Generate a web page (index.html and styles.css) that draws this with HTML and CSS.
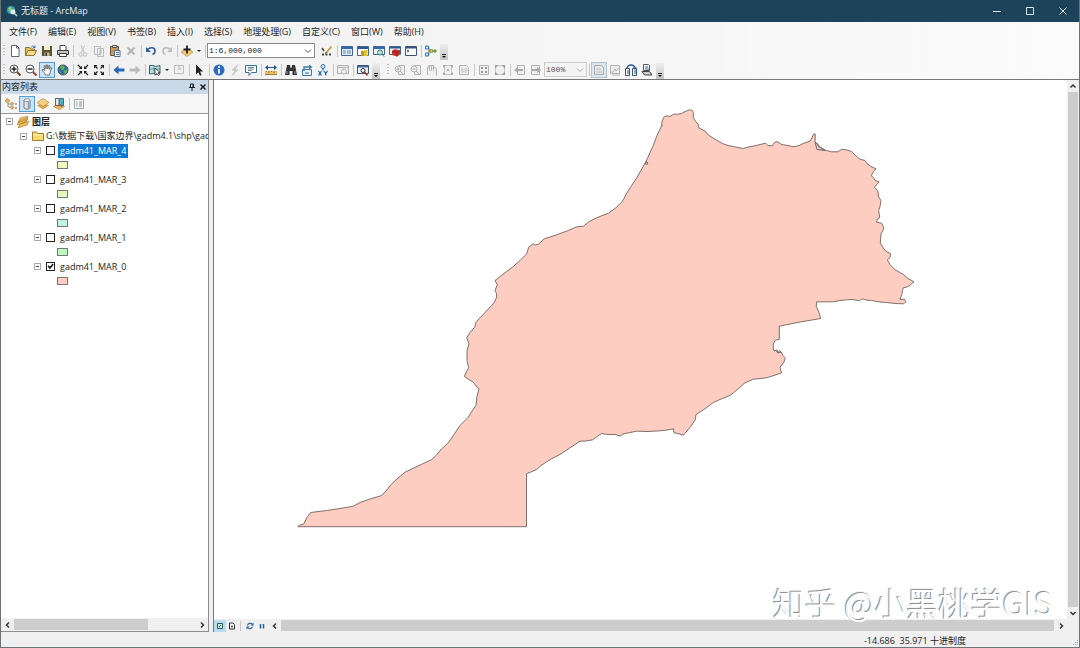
FILE: index.html
```html
<!DOCTYPE html>
<html lang="zh-CN">
<head>
    <meta charset="UTF-8">
    <meta name="viewport" content="width=device-width, initial-scale=1.0">
    <title>无标题 - ArcMap</title>
    <link rel="stylesheet" href="styles.css">
</head>
<body>
    <header class="titlebar">
        <svg class="icon" viewBox="0 0 12 12"><circle cx="5" cy="5" r="4" fill="#3aa0b8"/><path d="M2 3l3-1 1 3-2 2zM6 5l3-1v3l-2 1z" fill="#8ed07c"/><circle cx="7" cy="7" r="2" fill="#d8f0f6" stroke="#fff"/><path d="M8.500 8.500L11 11" stroke="#c8d4da" stroke-width="1.500"/></svg>
        <h1>无标题 - ArcMap</h1>
        <div class="winbtns">
            <button aria-label="最小化"><svg viewBox="0 0 10 10"><path d="M1 5.500h8"/></svg></button>
            <button aria-label="最大化"><svg viewBox="0 0 10 10"><path d="M1.500 1.500h7v7h-7z"/></svg></button>
            <button aria-label="关闭"><svg viewBox="0 0 10 10"><path d="M1.500 1.500l7 7M8.500 1.500l-7 7"/></svg></button>
        </div>
    </header>

    <div class="bars">
        <nav class="menu">
            <button>文件(F)</button>
            <button>编辑(E)</button>
            <button>视图(V)</button>
            <button>书签(B)</button>
            <button>插入(I)</button>
            <button>选择(S)</button>
            <button>地理处理(G)</button>
            <button>自定义(C)</button>
            <button>窗口(W)</button>
            <button>帮助(H)</button>
        </nav>

        <!-- standard toolbar -->
        <div class="toolbar">
            <span class="grip"></span>
            <button class="tool" aria-label="新建"><svg viewBox="0 0 12 12"><path d="M2.500.500h5l2.500 2.500v8.500h-7.500z" fill="#fff" stroke="#5c6773"/><path d="M7.500.500v2.500h2.500" fill="none" stroke="#5c6773"/></svg></button>
            <button class="tool" aria-label="打开"><svg viewBox="0 0 12 12"><path d="M.500 10.500v-8h4l1 1.500h4v2" fill="#e8c455" stroke="#8a7440"/><path d="M.500 10.500l2.500-5h8.500l-2.500 5z" fill="#f8dc7e" stroke="#8a7440"/><path d="M6 2.500c1.500-2 3-1.500 4 0m0-2v2h-2" fill="none" stroke="#3b6ea5"/></svg></button>
            <button class="tool" aria-label="保存"><svg viewBox="0 0 12 12"><path d="M1 1h10v10h-10z" fill="#5d5430"/><path d="M3 1h6v4h-6z" fill="#f2eed8"/><path d="M3.500 7.500h5v3.500h-5z" fill="#c9bf8a"/><path d="M4.500 8h1.500v3h-1.500z" fill="#333"/></svg></button>
            <button class="tool" aria-label="打印"><svg viewBox="0 0 12 12"><path d="M3 5v-4.500h5l1 1v3.500" fill="#fff" stroke="#444"/><path d="M.500 5.500h11v4h-11z" fill="#c4c4c4" stroke="#3c3c3c"/><path d="M2.500 8.500h7v3h-7z" fill="#fff" stroke="#3c3c3c"/></svg></button>
            <span class="sep"></span>
            <button class="tool off" aria-label="剪切"><svg viewBox="0 0 12 12"><path d="M4 .500l3 7M7.500.500l-3 7" fill="none" stroke="#999"/><circle cx="3.500" cy="9.500" r="1.700" fill="none" stroke="#999"/><circle cx="8" cy="9.500" r="1.700" fill="none" stroke="#999"/></svg></button>
            <button class="tool off" aria-label="复制"><svg viewBox="0 0 12 12"><path d="M1.500 1.500h6v8h-6zM4.500 3.500h6v8h-6z" fill="#eee" stroke="#999"/><path d="M6 6h3M6 8h3" stroke="#999"/></svg></button>
            <button class="tool" aria-label="粘贴"><svg viewBox="0 0 12 12"><path d="M1.500 1.500h8v9h-8z" fill="#c79a5b" stroke="#6b5333"/><path d="M3.500.500h4v2h-4z" fill="#ddd" stroke="#555"/><path d="M5.500 5.500h5.500v6h-5.500z" fill="#fff" stroke="#4b6a92"/><path d="M7 7.500h3M7 9.500h3" stroke="#4b6a92"/></svg></button>
            <button class="tool off" aria-label="删除"><svg viewBox="0 0 12 12"><path d="M2.500 2.500l7 7M9.500 2.500l-7 7" stroke="#888" stroke-width="1.800"/></svg></button>
            <span class="sep"></span>
            <button class="tool" aria-label="撤销"><svg viewBox="0 0 12 12"><path d="M2.500 4.500c3-3 7.500-2 7.500 1.500 0 2-1 3-2.500 3.500" fill="none" stroke="#2b5c9e" stroke-width="1.600"/><path d="M1 2v5h5z" fill="#2b5c9e"/></svg></button>
            <button class="tool off" aria-label="恢复"><svg viewBox="0 0 12 12"><path d="M9.500 4.500c-3-3-7.500-2-7.500 1.500 0 2 1 3 2.500 3.500" fill="none" stroke="#999" stroke-width="1.600"/><path d="M11 2v5h-5z" fill="#999"/></svg></button>
            <span class="sep"></span>
            <button class="tool" aria-label="添加数据"><svg viewBox="0 0 12 12"><path d="M6 3l6 4-6 4.500-6-4.500z" fill="#f1cc72" stroke="#a9832f" stroke-width=".6"/><path d="M6 .500v8M2.500 4.500h7" stroke="#222" stroke-width="1.800"/></svg></button>
            <button class="drop" aria-label="更多数据"></button>
            <span class="sep"></span>
            <div class="combo scale">
                <select aria-label="比例尺"><option>1:6,000,000</option></select>
                <svg viewBox="0 0 8 8"><path d="M1 2.500l3 3 3-3"/></svg>
            </div>
            <button class="tool" aria-label="编辑器"><svg viewBox="0 0 12 12"><path d="M1 9.500h10" stroke="#444" stroke-dasharray="2 1.500" stroke-width="2"/><path d="M1 3l2 3" stroke="#444" stroke-width="1.500"/><path d="M5 8l5.500-6.500" stroke="#c59a3c" stroke-width="1.800"/><path d="M4 9l.5-2 1.500 1z" fill="#333"/></svg></button>
            <span class="sep"></span>
            <button class="tool" aria-label="内容列表"><svg viewBox="0 0 12 12"><path d="M.500 1.500h11v9h-11z" fill="#e6eef8" stroke="#42648f"/><path d="M1 2h10v2h-10z" fill="#2f6ab3"/><path d="M2 6h3M6 6h4M2 8h3M6 8h4" stroke="#5587bf"/></svg></button>
            <button class="tool" aria-label="目录"><svg viewBox="0 0 12 12"><path d="M.500 1.500h11v9h-11z" fill="#fff" stroke="#42648f"/><path d="M1 2h10v2h-10z" fill="#2f5a93"/><path d="M4 6h3v5h-3z" fill="#b89a1e"/><path d="M7 5h3.500v6h-3.500z" fill="#e2c531"/></svg></button>
            <button class="tool" aria-label="搜索"><svg viewBox="0 0 12 12"><path d="M.500 1.500h11v8h-11z" fill="#eef4f8" stroke="#42648f"/><path d="M1 2h10v2h-10z" fill="#2f6ab3"/><circle cx="7" cy="7.500" r="2.500" fill="#bfe0d2" stroke="#338577"/><path d="M9 9.500l2 2" stroke="#338577"/></svg></button>
            <button class="tool" aria-label="工具箱"><svg viewBox="0 0 12 12"><path d="M.500 1.500h11v8h-11z" fill="#eee" stroke="#42648f"/><path d="M1 2h10v1.500h-10z" fill="#2f5a93"/><path d="M3 6l3-2 5 1.500v4l-3 2-5-1.500z" fill="#c9322c"/><path d="M3 6l5 1.500v4M8 7.500l3-2" fill="none" stroke="#8a1815" stroke-width=".8"/></svg></button>
            <button class="tool" aria-label="Python"><svg viewBox="0 0 12 12"><path d="M.500 1.500h11v9h-11z" fill="#fff" stroke="#42546c"/><path d="M1 2h10v1.500h-10z" fill="#33557f"/><path d="M2 5l2 1-2 1" fill="none" stroke="#222" stroke-width=".8"/></svg></button>
            <span class="sep"></span>
            <button class="tool" aria-label="模型构建器"><svg viewBox="0 0 12 12"><path d="M2 2.500h2v7h-2M4 6h6" fill="none" stroke="#444" stroke-width=".8"/><path d="M.500 1h3v3h-3zM.500 8h3v3h-3z" fill="#cfe5f5" stroke="#2f79bd"/><path d="M5 4.500h2.500v3h-2.500z" fill="#e4bf3a" stroke="#8d7a2c" stroke-width=".6"/><circle cx="10" cy="6" r="1.700" fill="#57a64a"/></svg></button>
            <button class="overflow" aria-label="更多"></button>
        </div>

        <!-- tools and layout toolbars -->
        <div class="toolbar">
            <span class="grip"></span>
            <button class="tool" aria-label="放大"><svg viewBox="0 0 12 12"><circle cx="5" cy="5" r="4" fill="#fff" stroke="#555"/><path d="M2.500 5h5M5 2.500v5" stroke="#222" stroke-width="1.500"/><path d="M8 8l3.500 3.500" stroke="#6d4b35" stroke-width="2"/></svg></button>
            <button class="tool" aria-label="缩小"><svg viewBox="0 0 12 12"><circle cx="5" cy="5" r="4" fill="#fff" stroke="#555"/><path d="M2.500 5h5" stroke="#222" stroke-width="1.500"/><path d="M8 8l3.500 3.500" stroke="#8b4a43" stroke-width="2"/></svg></button>
            <button class="tool on" aria-label="平移"><svg viewBox="0 0 12 12"><path d="M4.500 11l-1-2-2.500-3 1-.8 2 1.500-1-4.700 1.200-.3 1 3.300v-4h1.300l.3 4 1-3.500 1.200.4-.6 3.600 1.400-2 1 .5-1.800 4-.5 3z" fill="#fff" stroke="#555" stroke-width=".8"/></svg></button>
            <button class="tool" aria-label="全图"><svg viewBox="0 0 12 12"><circle cx="6" cy="6" r="5" fill="#2e69b0" stroke="#4a5966"/><path d="M3 2.500l3-1 2 2-2 3-2-1zM6.500 7l3-1.500 1 2-2.500 3zM2 7l2 1 .5 2z" fill="#61b34e"/></svg></button>
            <span class="sep"></span>
            <button class="tool" aria-label="固定比例放大"><svg viewBox="0 0 12 12"><path d="M1 1l3 3M11 1l-3 3M1 11l3-3M11 11l-3-3" stroke="#222" stroke-width="1.300"/><path d="M5 2v3h-3zM7 2v3h3zM5 10v-3h-3zM7 10v-3h3z" fill="#222"/></svg></button>
            <button class="tool" aria-label="固定比例缩小"><svg viewBox="0 0 12 12"><path d="M2 2l2.500 2.500M10 2l-2.500 2.500M2 10l2.500-2.500M10 10l-2.500-2.500" stroke="#222" stroke-width="1.300"/><path d="M1 1h3.500l-3.500 3.500zM11 1h-3.500l3.500 3.500zM1 11h3.500l-3.500-3.500zM11 11h-3.500l3.500-3.500z" fill="#222"/></svg></button>
            <span class="sep"></span>
            <button class="tool" aria-label="上一视图"><svg viewBox="0 0 12 12"><path d="M.500 6l5-4.500v3h6v3h-6v3z" fill="#2968b8"/></svg></button>
            <button class="tool off" aria-label="下一视图"><svg viewBox="0 0 12 12"><path d="M11.500 6l-5-4.500v3h-6v3h6v3z" fill="#999"/></svg></button>
            <span class="sep"></span>
            <button class="tool" aria-label="选择要素"><svg viewBox="0 0 12 12"><path d="M.500 1.500h4l2 1 4.500-1v8l-4 1-2.500-1-4 .500z" fill="#b6e0e2" stroke="#41606b"/><path d="M5 2v8M1 5h10" stroke="#54878f" stroke-width=".8"/><path d="M6 4v7l2-1.500 1.500 2 1-.8-1.500-2 2-.2z" fill="#fff" stroke="#222" stroke-width=".7"/></svg></button>
            <button class="drop" aria-label="选择方式"></button>
            <button class="tool off" aria-label="清除所选"><svg viewBox="0 0 12 12"><path d="M1.500 1.500h9v8h-9z" fill="#eee" stroke="#999"/><path d="M6 2v4l2-2" fill="none" stroke="#999"/></svg></button>
            <span class="sep"></span>
            <button class="tool" aria-label="选择元素"><svg viewBox="0 0 12 12"><path d="M3 .500v10l2.300-2.200 1.700 3.500 1.600-.8-1.600-3.400h3.200z" fill="#222"/></svg></button>
            <span class="sep"></span>
            <button class="tool" aria-label="识别"><svg viewBox="0 0 12 12"><circle cx="6" cy="6" r="5.500" fill="#2c6bc0"/><path d="M6 5v4.500" stroke="#fff" stroke-width="1.800"/><circle cx="6" cy="3" r="1.100" fill="#fff"/></svg></button>
            <button class="tool off" aria-label="超链接"><svg viewBox="0 0 12 12"><path d="M9 .500l-6 5.500 3 .500-3 5 6-5.500-3-.500z" fill="#bbb" stroke="#999" stroke-width=".6"/></svg></button>
            <button class="tool" aria-label="HTML 弹出窗口"><svg viewBox="0 0 12 12"><path d="M.500 1.500h11v7h-5l-2.500 3v-3h-3.500z" fill="#fff" stroke="#3f6c91"/><path d="M3 3.500h6M3 5h6M3 6.500h4" stroke="#3f6c91" stroke-width=".8"/></svg></button>
            <span class="sep"></span>
            <button class="tool" aria-label="测量"><svg viewBox="0 0 12 12"><path d="M0 7h12v4h-12z" fill="#edc064"/><path d="M1.500 8v-1M4 9v-2M6.500 8v-1M9 9v-2M0 10.500h12" stroke="#8a632a" stroke-width=".8"/><path d="M1 3.500h10" stroke="#2d5b98"/><path d="M0 3.500l3-2.500v5zM12 3.500l-3-2.500v5z" fill="#244e86"/></svg></button>
            <span class="sep"></span>
            <button class="tool" aria-label="查找"><svg viewBox="0 0 12 12"><path d="M2 1h3l.500 3h1l.500-3h3l2 10h-4.500v-4h-3v4h-4.500z" fill="#333"/><path d="M2 7v3M10 7v3" stroke="#8ba0ac"/></svg></button>
            <button class="tool" aria-label="查找路径"><svg viewBox="0 0 12 12"><path d="M1.500 5.500h9v6h-9z" fill="#e3f0f7" stroke="#417ca8"/><path d="M3 7v-4h6" fill="none" stroke="#417ca8" stroke-width="1.400"/><path d="M8 .500l3.500 2.500-3.500 2.500z" fill="#417ca8"/><path d="M4 9h4" stroke="#417ca8"/></svg></button>
            <button class="tool" aria-label="转到 XY"><svg viewBox="0 0 12 12"><circle cx="6" cy="2.500" r="2" fill="#dcecf5" stroke="#2d6cac"/><path d="M6 4.500v2M1.500 7l3 4.500M4.500 7l-3 4.500M7 7l1.700 2.500v2M10.500 7l-1.700 2.500" fill="none" stroke="#2469ad" stroke-width="1.300"/></svg></button>
            <span class="sep"></span>
            <button class="tool off" aria-label="时间滑块"><svg viewBox="0 0 12 12"><path d="M.500 1.500h11v8h-11zM1 3.500h10" fill="#eee" stroke="#888"/><circle cx="7" cy="7.500" r="2.500" fill="#eee" stroke="#888"/></svg></button>
            <span class="sep"></span>
            <button class="tool" aria-label="创建查看器窗口"><svg viewBox="0 0 12 12"><path d="M.500 1.500h11v8h-11z" fill="#e9eff6" stroke="#3f5675"/><path d="M1 2h10v1.500h-10z" fill="#456a9a"/><circle cx="6" cy="6.500" r="2" fill="#fff" stroke="#333"/><path d="M7.500 8l3 3.500" stroke="#b5342e" stroke-width="1.500"/></svg></button>
            <button class="overflow" aria-label="更多"></button>
            <span class="grip second"></span>
            <button class="tool off" aria-label="布局放大"><svg viewBox="0 0 12 12"><path d="M4.500 1.500h6v9h-6z" fill="#eee" stroke="#888"/><circle cx="4" cy="5" r="3" fill="#eee" stroke="#888"/><path d="M2.500 5h3M4 3.500v3M6 7l4 4" stroke="#777"/></svg></button>
            <button class="tool off" aria-label="布局缩小"><svg viewBox="0 0 12 12"><path d="M4.500 1.500h6v9h-6z" fill="#eee" stroke="#888"/><circle cx="4" cy="5" r="3" fill="#eee" stroke="#888"/><path d="M2.500 5h3M6 7l4 4" stroke="#777"/></svg></button>
            <button class="tool off" aria-label="布局平移"><svg viewBox="0 0 12 12"><path d="M1.500 11v-8l2-1.500v5-5h2v5-5h2v5-4l3 2v7" fill="#eee" stroke="#888"/></svg></button>
            <button class="tool off" aria-label="缩放整个页面"><svg viewBox="0 0 12 12"><path d="M2.500 1.500h7v9h-7z" fill="#eee" stroke="#aaa"/><path d="M1 1h3l-3 3zM11 1h-3l3 3zM1 11h3l-3-3zM11 11h-3l3-3z" fill="#777"/><path d="M5 5h2v2h-2z" fill="#888"/></svg></button>
            <button class="tool off" aria-label="缩放至100%"><svg viewBox="0 0 12 12"><path d="M1.500 1.500h7l2 2v7h-9z" fill="#eee" stroke="#888"/><path d="M4 4v5M8 4v5M6 5v1M6 7v1" stroke="#888"/></svg></button>
            <span class="sep"></span>
            <button class="tool off" aria-label="布局固定放大"><svg viewBox="0 0 12 12"><path d="M1.500 1.500h9v9h-9z" fill="#eee" stroke="#888"/><path d="M3 3h2v2h-2zM7 3h2v2h-2zM3 7h2v2h-2zM7 7h2v2h-2z" fill="#555"/></svg></button>
            <button class="tool off" aria-label="布局固定缩小"><svg viewBox="0 0 12 12"><path d="M1.500 1.500h9v9h-9z" fill="#eee" stroke="#aaa"/><path d="M1 1h3.500l-3.500 3.500zM11 1h-3.500l3.500 3.500zM1 11h3.500l-3.500-3.500zM11 11h-3.500l3.500-3.500z" fill="#666"/></svg></button>
            <span class="sep"></span>
            <button class="tool off" aria-label="上一范围"><svg viewBox="0 0 12 12"><path d="M3.500 1.500h7v9h-7z" fill="#eee" stroke="#888"/><path d="M0 6l4-3v2h5v2h-5v2z" fill="#777"/></svg></button>
            <button class="tool off" aria-label="下一范围"><svg viewBox="0 0 12 12"><path d="M1.500 1.500h8v9h-8z" fill="#eee" stroke="#888"/><path d="M11 6l-4-3v2h-5v2h5v2z" fill="#777"/></svg></button>
            <div class="combo percent">
                <select aria-label="页面缩放"><option>100%</option></select>
                <svg viewBox="0 0 8 8"><path d="M1 2.500l3 3 3-3"/></svg>
            </div>
            <span class="sep"></span>
            <button class="tool off on" aria-label="切换描绘模式"><svg viewBox="0 0 12 12"><path d="M1.500 1.500h7l2 2v7h-9z" fill="#eee" stroke="#888"/><path d="M3 5h5M3 8h6" stroke="#999"/></svg></button>
            <button class="tool off" aria-label="焦点数据框"><svg viewBox="0 0 12 12"><path d="M1.500 1.500h9v8h-9z" fill="#e4e4e4" stroke="#888"/><path d="M3 9l3-4 1 2 3-3M3 11h8" fill="none" stroke="#888"/></svg></button>
            <button class="tool" aria-label="更改布局"><svg viewBox="0 0 12 12"><path d="M.500 4.500h4v7h-4zM7.500 4.500h4v7h-4z" fill="#fff" stroke="#33567d"/><path d="M2 4c1-4 7-4 8 0" fill="none" stroke="#2d5b91" stroke-width="1.400"/><path d="M8 3.500h4l-2 2.500z" fill="#2d5b91"/><path d="M2 7h2M2 9h2M9 7h2M9 9h2" stroke="#33567d"/></svg></button>
            <button class="tool" aria-label="数据驱动页面"><svg viewBox="0 0 12 12"><path d="M2.500.500h5l1 1v5h-6z" fill="#fff" stroke="#555"/><path d="M4 3h3M4 5h4" stroke="#356090"/><path d="M1 7.500h7.500l2.500 3.500h-7.500z" fill="#ccc" stroke="#444"/></svg></button>
            <button class="overflow" aria-label="更多"></button>
        </div>
    </div>

    <main class="work">
        <aside class="toc">
            <div class="toc-head">
                <h2>内容列表</h2>
                <button aria-label="自动隐藏"><svg viewBox="0 0 8 8"><path d="M2.500 1h3v3.500M2.500 1v3.500M1 4.500h6M4 5v3" fill="none" stroke="#222"/><path d="M4.500 1h1v3.500h-1z" fill="#222"/></svg></button>
                <button aria-label="关闭内容列表"><svg viewBox="0 0 8 8"><path d="M1.500 1.500l5 5M6.500 1.500l-5 5" stroke="#111" stroke-width="1.400"/></svg></button>
            </div>
            <div class="toc-tools">
                <button class="tool" aria-label="按绘制顺序列出"><svg viewBox="0 0 12 12"><path d="M3 4v5h3M3 6h4" fill="none" stroke="#999"/><path d="M2 .500l3 2-2.500 2.500-2.500-2zM7 4l2 1.500-2 2-1.500-2zM7 8l2 1.500-2 2-1.500-2z" fill="#e6b85c" stroke="#a07c35" stroke-width=".6"/><path d="M10 6h2M10 10h2" stroke="#666"/></svg></button>
                <button class="tool on" aria-label="按源列出"><svg viewBox="0 0 12 12"><path d="M3 2v8c1 1.500 5 1.500 6 0v-8z" fill="#dfe3e6" stroke="#70808d"/><ellipse cx="6" cy="2.200" rx="3" ry="1.400" fill="#fff" stroke="#70808d" stroke-width=".8"/><path d="M7.500 4v6.500" stroke="#8d99a3" stroke-width="1.500"/></svg></button>
                <button class="tool" aria-label="按可见性列出"><svg viewBox="0 0 12 12"><path d="M6 4l6 3.500-6 4-6-4z" fill="#d9a44e"/><path d="M6 .500l6 4-6 4-6-4z" fill="#f6d283" stroke="#b98a3a" stroke-width=".7"/></svg></button>
                <button class="tool" aria-label="按选择列出"><svg viewBox="0 0 12 12"><path d="M6 5l5.500 3.500-5.500 3-5.500-3z" fill="#e8b85a" stroke="#b2823a" stroke-width=".7"/><path d="M2.500.500h8v7h-8z" fill="#42b6c2" stroke="#416c80"/><path d="M3 1h3v6h-3z" fill="#d7f2f2"/><path d="M6 1v7l1.500-1.500 1.500 2.500" fill="none" stroke="#b93a32"/></svg></button>
                <span class="sep"></span>
                <button class="tool" aria-label="选项"><svg viewBox="0 0 12 12"><path d="M1.500 1.500h9v9h-9z" fill="#fff" stroke="#9aa"/><path d="M3 4h1.500M3 6h1.500M3 8h1.500M6 4h3M6 6h3M6 8h3" stroke="#567" stroke-width=".8"/></svg></button>
            </div>
            <div class="tree">
                <div class="row lvl0">
                    <button class="exp" aria-label="折叠"></button>
                    <svg class="icon" viewBox="0 0 12 12"><path d="M3 8l9-3-2 4-9 3zM2 5l9-3-2 4-9 3zM3 2l8-2-1 4-9 2.500z" fill="#efbd5c" stroke="#a87b2c" stroke-width=".6"/></svg>
                    <b>图层</b>
                </div>
                <div class="row lvl1">
                    <button class="exp" aria-label="折叠"></button>
                    <svg class="icon" viewBox="0 0 12 12"><path d="M.500 10.500v-8.500h4l1 1.500h6v7z" fill="#f5d96a" stroke="#9a8330"/><path d="M1 5h10" stroke="#fff3b8"/></svg>
                    <span>G:\数据下载\国家边界\gadm4.1\shp\gac</span>
                </div>
                <div class="row lvl2"><button class="exp" aria-label="折叠"></button><input type="checkbox" id="mar4"><label class="sel" for="mar4">gadm41_MAR_4</label></div>
                <div class="symbol"><button class="swatch c4" aria-label="gadm41_MAR_4"></button></div>
                <div class="row lvl2"><button class="exp" aria-label="折叠"></button><input type="checkbox" id="mar3"><label for="mar3">gadm41_MAR_3</label></div>
                <div class="symbol"><button class="swatch c3" aria-label="gadm41_MAR_3"></button></div>
                <div class="row lvl2"><button class="exp" aria-label="折叠"></button><input type="checkbox" id="mar2"><label for="mar2">gadm41_MAR_2</label></div>
                <div class="symbol"><button class="swatch c2" aria-label="gadm41_MAR_2"></button></div>
                <div class="row lvl2"><button class="exp" aria-label="折叠"></button><input type="checkbox" id="mar1"><label for="mar1">gadm41_MAR_1</label></div>
                <div class="symbol"><button class="swatch c1" aria-label="gadm41_MAR_1"></button></div>
                <div class="row lvl2"><button class="exp" aria-label="折叠"></button><input type="checkbox" id="mar0" checked><label for="mar0">gadm41_MAR_0</label></div>
                <div class="symbol"><button class="swatch c0" aria-label="gadm41_MAR_0"></button></div>
            </div>
            <div class="hscroll">
                <button aria-label="向左"><svg viewBox="0 0 8 8"><path d="M5 1.500l-2.500 2.500 2.500 2.500"/></svg></button>
                <div class="track"><div class="thumb part"></div></div>
                <button aria-label="向右"><svg viewBox="0 0 8 8"><path d="M3 1.500l2.500 2.500-2.500 2.500"/></svg></button>
            </div>
        </aside>

        <section class="view">
            <div class="canvas-row">
                <div class="canvas">
                    <svg class="map" viewBox="214 80 853 538">
                        <path class="land" d="M664.300 116L667 115.300 670 116 673.500 113.700 678 113.700 681.700 113 684 111.500 686.700 110.500 689.300 109.300 692.300 110 693.300 112 693.300 117 695.500 121 698 123.500 699 127.500 702 129 705 130.500 708.300 134.500 713 137.500 718 140.500 723.300 143.300 728 145 733.300 146 738 147 743.300 148 748 146.500 755 145.300 760 144 765.700 142.700 767.700 145 772.300 145.300 774 142.500 775.700 141.300 778 141.500 781.700 144 788 145 794 146.300 800 144.700 803 143 806 142 810 140.700 812 137.300 813.700 133.300 815.300 133.700 815 141.700 817 143 820 146.500 826 150 831.700 151.300 837.700 151.300 842 148.700 847 149.500 851.700 151 856 155.500 860 158.700 865 160 867 163 871 166 876 168.300 873.500 171 871.300 175 874 178 875 180 879 181.300 877 184 874.300 186.700 877.700 190 878.700 196.700 881 200 880 206 878.700 210 879.700 217.300 877 219 876.700 221.700 881.700 222.700 883.700 227.300 883 230 881 233.300 880.300 242.700 883 247 885 250 890.700 253.300 890 257 887.300 259.300 890 264 895 269.300 899 271.500 903.300 274 908 278 914 281.300 908.300 286 903.300 287.300 902.500 290 902 293.300 900 299 904.300 298.700 906 301.300 903.300 303.300 895 303 886.700 302 880 301.500 871.700 300 866 299.500 862.300 298.300 859.300 300.300 853 299 846.700 299.300 840 300 833.300 301.300 816.700 301.300 816.300 306 819 312 820.700 318 800 321.500 779.300 325.700 779.300 338.700 775 340 773.300 343.300 773.300 348 774 350.500 777 349.500 778.500 352.500 781 351.500 783 355 785.300 357.300 784 361.500 780 366.700 780.500 369 781.700 372.300 774 375 766.700 377.300 753.300 378.700 745 382.300 738 388.500 730 395 721 398.500 713.300 402 704 409 696 414 695.300 419.300 690 427 683.300 434.700 678 433 674 432.300 673.500 430 674 428.300 667 429.500 660 430.300 648 431 636.700 430.700 630 432 625 433 622 434 620.700 435.700 615 434 608 434 601.700 433 597 436 592.700 439.300 586 440.500 580 440.700 572 446 560 454 552 458 546.700 461.300 541 465 536.700 469 532 471 526.500 473.300 526.500 526.200 297.700 526.200 300 524.500 304 523.300 306.700 517.300 310.700 512 326.700 510 340 508 353.300 505.700 360 502 370 498.500 381.700 495 386 490.500 391.700 483.300 398 477.500 405 471.700 418 465.500 431.700 459 436 455 441.700 448.300 448.300 442.300 454 434 460 425 468.300 416.700 472 410.500 476 405 477 396 479 388.300 476 385.500 473.300 381.700 468 378.500 464.300 376 466.500 371 468.700 367.300 467 360 467 350 469 343.300 466.700 337.300 470 332 474.700 326.700 476 321.700 484 313 491.700 305 494.500 301.500 496.700 296.700 496.500 293 495 290 497.300 284.300 495 280 504 273 513.300 266 520 260 526.700 253.300 528.700 246.700 533.300 243.300 535 244.500 538.300 243.700 544.300 238.300 556 234.500 568.300 230 576.700 226.300 583.300 225.700 590 220.500 596.700 217.300 608.300 212.700 615 208 621.700 201.700 624 198 626.700 192.700 631 186 636.700 177.300 642 168 647.300 158.300 650 152 653.300 145 657 135 661.700 125 662 121z"/>
                        <path class="coast" d="M815 141.700L817 149 825 150M817 142.500l1.500 3.500 6 4M646 161l2 1.500-1.500 2-1-2zM776 350l2 2.500 1.500-2.500 2 2.500M661.500 124.500l1 1"/>
                    </svg>
                    <div class="watermark">知乎 @小黑桃学GIS</div>
                </div>
                <div class="vscroll">
                    <button aria-label="向上"><svg viewBox="0 0 8 8"><path d="M1.500 5.500l2.500-2.500 2.500 2.500"/></svg></button>
                    <div class="track"><div class="thumb"></div></div>
                    <button aria-label="向下"><svg viewBox="0 0 8 8"><path d="M1.500 3l2.500 2.500 2.500-2.500"/></svg></button>
                </div>
            </div>
            <div class="view-foot">
                <button class="mode on" aria-label="数据视图"><svg viewBox="0 0 8 8"><path d="M1.500 1.500h5v5h-5z" fill="#d7efe0" stroke="#2d5a52"/><path d="M3 5l2-2" stroke="#3d8c5a"/></svg></button>
                <button class="mode" aria-label="布局视图"><svg viewBox="0 0 8 8"><path d="M1.500 1h3.500l1.500 1.500v4.500h-5z" fill="#fff" stroke="#333"/><path d="M3 3.500h2v2h-2z" fill="#567"/></svg></button>
                <span class="sep"></span>
                <button class="mode" aria-label="刷新视图"><svg viewBox="0 0 8 8"><path d="M1.500 3.500c.5-2.500 3.500-3 5-1M6.500 4.500c-.5 2.500-3.500 3-5 1" fill="none" stroke="#245f9a" stroke-width="1.200"/><path d="M7.500.500v3h-3zM.500 7.500v-3h3z" fill="#245f9a"/></svg></button>
                <button class="mode" aria-label="暂停绘制"><svg viewBox="0 0 8 8"><path d="M2.500 2v4.500M5.500 2v4.500" stroke="#245f9a" stroke-width="1.500"/></svg></button>
                <div class="hscroll">
                    <button aria-label="向左"><svg viewBox="0 0 8 8"><path d="M5 1.500l-2.500 2.500 2.500 2.500"/></svg></button>
                    <div class="track"><div class="thumb"></div></div>
                    <button aria-label="向右"><svg viewBox="0 0 8 8"><path d="M3 1.500l2.500 2.500-2.500 2.500"/></svg></button>
                </div>
                <span class="corner"></span>
            </div>
        </section>
    </main>

    <footer class="status">
        <span>-14.686&nbsp; 35.971 十进制度</span>
        <svg viewBox="0 0 8 8"><path d="M6 1h1v1h-1zM4 3h1v1h-1zM6 3h1v1h-1zM2 5h1v1h-1zM4 5h1v1h-1zM6 5h1v1h-1z" fill="#aaa"/></svg>
    </footer>
</body>
</html>
```

FILE: styles.css
```css
*{
    box-sizing: border-box;
}
body{
    margin: 0;
    height: 100vh;
    display: flex;
    flex-direction: column;
    overflow: hidden;
    border: 1px solid #6c7478;
    border-top: 0;
    background-color: #f0f0f0;
    color: #222;
    font-family: "Open Sans", "Noto Sans CJK SC", sans-serif;
    font-size: 9px;
    line-height: 14px;
}
button{
    padding: 0;
    border: 0;
    background: none;
    color: inherit;
    font: inherit;
    display: flex;
    align-items: center;
    justify-content: center;
    flex: none;
}
h1, h2{
    margin: 0;
    font-size: 9px;
    font-weight: normal;
}
svg{
    display: block;
}
.icon{
    width: 12px;
    height: 12px;
    flex: none;
}

/* title bar */
.titlebar{
    flex: none;
    height: 22px;
    display: flex;
    align-items: center;
    gap: 3px;
    padding-left: 5px;
    background-color: #1c4359;
    color: #e6edf1;
}
.winbtns{
    margin-left: auto;
    display: flex;
}
.winbtns button{
    width: 33px;
    height: 20px;
}
.winbtns svg{
    width: 10px;
    height: 10px;
    fill: none;
    stroke: #dce6eb;
}

/* menu and toolbars */
.bars{
    flex: none;
    background: linear-gradient(to right, #f0f0f0, #fbfbfb);
    border-bottom: 1px solid #777;
}
.menu{
    display: flex;
    gap: 11px;
    padding-left: 8px;
    height: 19px;
}
.toolbar{
    display: flex;
    align-items: center;
    height: 19px;
}
.grip{
    width: 2px;
    height: 12px;
    margin: 0 2px;
    background: repeating-linear-gradient(to bottom, #bbb 0, #bbb 1px, transparent 1px, transparent 3px);
}
.grip.second{
    margin: 0 3px 0 7px;
}
.tool{
    width: 16px;
    height: 16px;
}
.tool svg{
    width: 12px;
    height: 12px;
}
.tool.off svg{
    opacity: .6;
}
.tool.on{
    background-color: #cbe3f5;
    border: 1px solid #569fd6;
}
.tool.off.on{
    background-color: #dde6ed;
    border-color: #b0c4d3;
}
.sep{
    width: 1px;
    height: 12px;
    margin: 0 1px 0 2px;
    background-color: #c6c6c6;
}
.drop{
    width: 8px;
    height: 16px;
}
.drop::after{
    content: "";
    border: 2px solid transparent;
    border-top-color: #222;
    border-bottom: 0;
}
.overflow{
    width: 8px;
    height: 16px;
    margin-left: 1px;
    align-self: flex-end;
    flex-direction: column;
    justify-content: flex-end;
    gap: 1px;
    padding-bottom: 2px;
    background: linear-gradient(#eee, #c4c4c4);
}
.overflow::before{
    content: "";
    width: 4px;
    height: 1px;
    background-color: #222;
}
.overflow::after{
    content: "";
    border: 2px solid transparent;
    border-top-color: #111;
    border-bottom: 0;
}
.combo{
    display: grid;
    align-items: center;
    height: 15px;
}
.combo select{
    grid-area: 1 / 1;
    width: 100%;
    height: 100%;
    margin: 0;
    padding: 0 10px 0 1px;
    border: 1px solid #8a8a8a;
    border-radius: 0;
    background-color: #fff;
    color: #222;
    appearance: none;
    font-family: "Liberation Mono", monospace;
    font-size: 8px;
}
.combo svg{
    grid-area: 1 / 1;
    justify-self: end;
    width: 8px;
    height: 8px;
    margin-right: 3px;
    fill: none;
    stroke: #555;
    pointer-events: none;
}
.scale{
    width: 108px;
    margin-right: 4px;
}
.percent{
    width: 43px;
}
.percent select{
    border-color: #ccc;
    background-color: #f4f4f4;
    color: #555;
}
.percent svg{
    stroke: #aaa;
}

/* table of contents */
.work{
    flex: 1;
    min-height: 0;
    display: flex;
    gap: 4px;
}
.toc{
    width: 208px;
    flex: none;
    display: flex;
    flex-direction: column;
    border-right: 1px solid #8c8c8c;
    border-bottom: 1px solid #8c8c8c;
}
.toc-head{
    display: flex;
    align-items: center;
    height: 14px;
    padding-left: 1px;
    background-color: #c9d9e7;
}
.toc-head h2{
    flex: 1;
}
.toc-head button{
    width: 11px;
    height: 14px;
}
.toc-head svg{
    width: 8px;
    height: 8px;
}
.toc-tools{
    display: flex;
    align-items: center;
    height: 20px;
    padding-left: 2px;
    background-color: #f6f6f6;
    border-bottom: 1px solid #999;
}
.tree{
    flex: 1;
    min-height: 0;
    overflow: hidden;
    background-color: #fff;
}
.row{
    display: flex;
    align-items: center;
    height: 15px;
    white-space: nowrap;
}
.lvl0{
    padding-left: 5px;
}
.lvl0 .icon{
    margin: 0 3px 0 4px;
}
.lvl1{
    padding-left: 19px;
    height: 14px;
}
.lvl1 .icon{
    margin: 0 2px 0 5px;
}
.lvl2{
    padding-left: 33px;
}
.exp{
    width: 7px;
    height: 7px;
    border: 1px solid #aaa;
    background-color: #fff;
}
.exp::after{
    content: "";
    width: 3px;
    height: 1px;
    background-color: #445;
}
.row input{
    appearance: none;
    flex: none;
    display: grid;
    place-items: center;
    width: 9px;
    height: 9px;
    margin: 0 3px 0 5px;
    border: 1px solid #222;
    background-color: #fff;
}
.row input:checked::after{
    content: "";
    width: 7px;
    height: 7px;
    background-color: #111;
    clip-path: polygon(8% 45%, 25% 32%, 42% 55%, 80% 8%, 95% 25%, 42% 90%);
}
.row label{
    padding: 0 2px;
}
.row .sel{
    background-color: #0a78d6;
    color: #fff;
}
.symbol{
    display: flex;
    align-items: center;
    height: 14px;
    padding-left: 56px;
}
.swatch{
    width: 11px;
    height: 8px;
    border: 1px solid #777;
}
.c4{
    background-color: #f3f9c0;
}
.c3{
    background-color: #e2f8bd;
}
.c2{
    background-color: #c1f2e6;
}
.c1{
    background-color: #befabe;
}
.c0{
    background-color: #fccdc0;
}

/* scroll bars */
.hscroll{
    display: flex;
    flex: none;
    height: 13px;
    background-color: #f0f0f0;
}
.hscroll button{
    width: 13px;
    height: 13px;
}
.vscroll button{
    width: 12px;
    height: 12px;
}
.hscroll svg, .vscroll svg{
    width: 8px;
    height: 8px;
    fill: none;
    stroke: #333;
    stroke-width: 1.5;
}
.track{
    flex: 1;
    padding: 1px 0;
}
.thumb{
    height: 100%;
    background-color: #cdcdcd;
}
.part{
    width: 74%;
}
.vscroll{
    width: 12px;
    flex: none;
    display: flex;
    flex-direction: column;
    background-color: #f0f0f0;
}
.vscroll .track{
    padding: 0 1px;
}

/* map view */
.view{
    flex: 1;
    min-width: 0;
    display: flex;
    flex-direction: column;
    border-left: 1px solid #777;
}
.canvas-row{
    flex: 1;
    min-height: 0;
    display: flex;
}
.canvas{
    flex: 1;
    min-width: 0;
    position: relative;
    background-color: #fff;
}
.map{
    width: 100%;
    height: 100%;
}
.land{
    fill: #fccdc0;
    stroke: #80706c;
    stroke-width: 1;
}
.coast{
    fill: none;
    stroke: #666;
    stroke-width: 1;
}
.watermark{
    position: absolute;
    right: 14px;
    bottom: 0;
    font-family: "Noto Sans CJK SC", sans-serif;
    font-size: 32px;
    line-height: 34px;
    color: #fff;
    text-shadow: -1px -1px 1px #888;
}
.view-foot{
    display: flex;
    align-items: center;
    height: 13px;
    flex: none;
    background-color: #f0f0f0;
}
.view-foot .hscroll{
    flex: 1;
}
.mode{
    width: 12px;
    height: 12px;
}
.mode svg{
    width: 8px;
    height: 8px;
}
.mode.on{
    background-color: #b9dcf0;
}
.view-foot .sep{
    margin: 0 3px 0 2px;
    height: 10px;
}
.corner{
    width: 12px;
}

/* status bar */
.status{
    flex: none;
    display: flex;
    align-items: center;
    justify-content: flex-end;
    gap: 105px;
    height: 15px;
    padding-top: 2px;
}
.status svg{
    width: 8px;
    height: 8px;
    align-self: flex-end;
}
```
